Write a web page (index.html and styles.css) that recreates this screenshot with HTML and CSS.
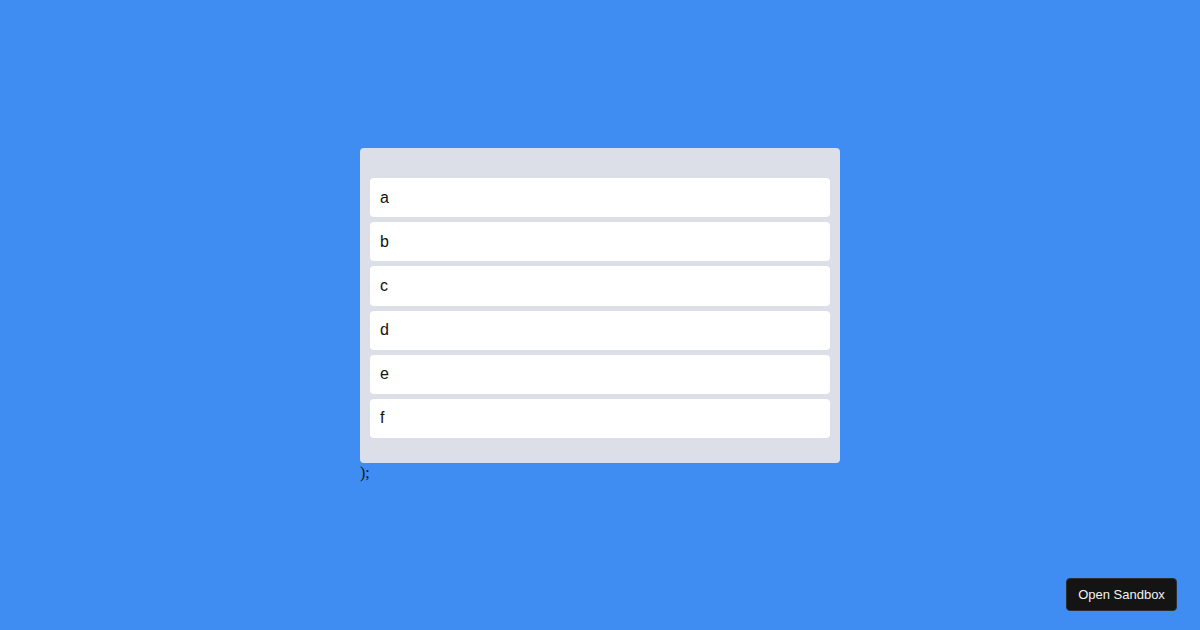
FILE: index.html
```html
<!DOCTYPE html>
<html>
<head>
<meta charset="utf-8">
<link rel="stylesheet" href="styles.css">
</head>
<body>
<div class="page">
  <div class="wrap">
    <div class="board">
      <div class="list">
        <div class="item">a</div>
        <div class="item">b</div>
        <div class="item">c</div>
        <div class="item">d</div>
        <div class="item">e</div>
        <div class="item">f</div>
      </div>
    </div>
    <div class="tail">);</div>
  </div>
</div>
<button class="sandbox">Open Sandbox</button>
</body>
</html>
```

FILE: styles.css
```css
html, body {
  margin: 0;
  padding: 0;
  height: 100%;
}
body {
  background: #3f8df2;
  font-family: "Liberation Serif", serif;
}
.page {
  height: 630px;
  display: flex;
  align-items: center;
  justify-content: center;
}
.wrap {
  width: 480px;
}
.board {
  background: #dcdfe8;
  border-radius: 4px;
  padding: 30px 10px 25px;
}
.list {
  display: flex;
  flex-direction: column;
  gap: 5px;
}
.item {
  background: #ffffff;
  border-radius: 4px;
  height: 39.2px;
  display: flex;
  align-items: center;
  padding-left: 10px;
  font-family: "Liberation Sans", Arial, sans-serif;
  font-size: 16px;
  color: #111;
}
.tail {
  font-size: 16px;
  line-height: 19px;
  color: #111;
}
.sandbox {
  position: fixed;
  right: 23px;
  bottom: 19px;
  width: 111px;
  height: 33px;
  background: #141414;
  color: #f2f2f2;
  border: 1px solid #2e2e2e;
  border-radius: 4px;
  font-family: "Liberation Sans", Arial, sans-serif;
  font-size: 13px;
  padding: 0;
}
```
